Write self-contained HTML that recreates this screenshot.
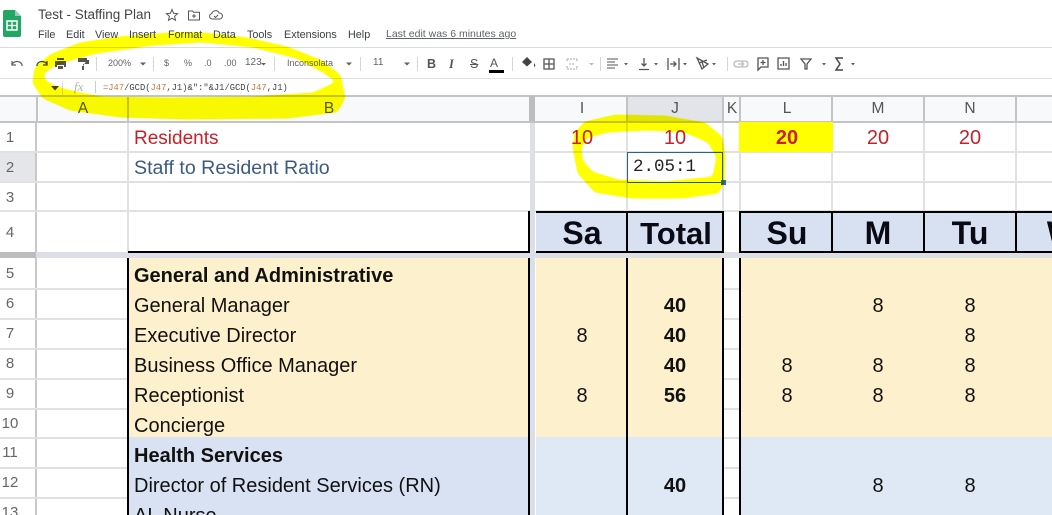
<!DOCTYPE html>
<html><head><meta charset="utf-8"><style>
html,body{margin:0;padding:0;width:1052px;height:515px;overflow:hidden;background:#fff}
body{position:relative;font-family:"Liberation Sans",sans-serif;color:#000}
div{position:absolute}
.t{white-space:nowrap;line-height:1}
.m{top:30px;font-size:10.8px;color:#3c4043}
.tb{top:59px;font-size:9px;color:#5f6368}
.ch{top:101px;font-size:15.5px;color:#555;width:60px;text-align:center}
.rh{left:0;width:20px;text-align:center;font-size:15px;color:#666}
.b{left:134px;font-size:20px;color:#111}
.n{font-size:20px;width:60px;text-align:center;color:#111}
.c{font-size:20px;width:60px;text-align:center;color:#c8202a;top:128px}
.h{font-size:32px;font-weight:bold;width:120px;text-align:center;top:217px;color:#0a0a14}
.g{background:#e1e1e1}
.k{background:#000}
</style></head><body>
<!-- title bar -->
<svg style="position:absolute;left:0;top:0" width="30" height="44"><path d="M5 10h10l6 6v19a2 2 0 0 1-2 2H5a2 2 0 0 1-2-2V12a2 2 0 0 1 2-2z" fill="#23a566"/><path d="M15 10l6 6h-6z" fill="#8ed1b1"/><path d="M7 21h10v9H7z" fill="none" stroke="#fff" stroke-width="1.500"/><path d="M7 25.500h10M12 21v9" stroke="#fff" stroke-width="1.300"/></svg>
<div class="t" style="left:38px;top:8px;font-size:13.500px;color:#444">Test - Staffing Plan</div>
<svg style="position:absolute;left:164px;top:7px" width="64" height="16" fill="none" stroke="#555" stroke-width="1"><path d="M8 2.500l1.600 3.800 4 .3-3 2.700.9 4L8 11.200l-3.500 2.100.9-4-3-2.700 4-.3z"/><path d="M24.500 4h4l1 1.200h6V13h-11z"/><path d="M30 7v4M28 9h4"/><path d="M48 12a2.700 2.700 0 0 1-.3-5.300 4 4 0 0 1 7.500-.7 3 3 0 0 1 .5 6z"/><path d="M50 9l1.500 1.500 2.500-2.500"/></svg>
<div class="t m" style="left:38px">File</div><div class="t m" style="left:66px">Edit</div><div class="t m" style="left:95px">View</div><div class="t m" style="left:129px">Insert</div><div class="t m" style="left:168px">Format</div><div class="t m" style="left:213px">Data</div><div class="t m" style="left:247px">Tools</div><div class="t m" style="left:284px">Extensions</div><div class="t m" style="left:348px">Help</div>
<div class="t" style="left:386px;top:29px;font-size:10.500px;color:#5f6368;text-decoration:underline">Last edit was 6 minutes ago</div>
<!-- toolbar -->
<div style="left:0;top:47px;width:1052px;height:1px;background:#dadce0"></div>
<div style="left:0;top:78px;width:1052px;height:1px;background:#e0e0e0"></div>
<svg style="position:absolute;left:0;top:48px" width="1052" height="30" fill="none" stroke="#5f6368" stroke-width="1.300">
<path d="M12 17a5 4 0 0 1 10 1M12 13v4h4"/><path d="M47 17a5 4 0 0 0-10 1M47 13v4h-4" stroke="#444"/>
<path d="M55 13h11v6h-2v-2h-7v2h-2z" fill="#555" stroke="none"/><path d="M57 10h7v2h-7zM58 18h5v3h-5z" fill="#555" stroke="none"/>
<path d="M78 10h9v4h-9zM87 12h2v4h-6v2M82 18h2v4h-2z" fill="#555" stroke="none"/>
<path d="M96.500 9v14M153.500 9v14M274.500 9v14M360.500 9v14M417.500 9v14M512.500 9v14M600.500 9v14M727.500 9v14" stroke="#d5d5d5" stroke-width="1"/>
<path d="M140 14.500h6l-3 3zM346 14.500h6l-3 3zM404 14.500h6l-3 3z" fill="#5f6368" stroke="none"/>
<path d="M261 15h5l-2.500 2.500z" fill="#5f6368" stroke="none"/>
<path d="M522 14l5-5 5 5-5 4.500zM534 15l1.500 2.500-1.500 1.500" fill="#444" stroke="none"/>
<path d="M544 11h10v10h-10zM544 16h10M549 11v10" stroke="#555"/>
<path d="M567 11h10M567 21h10M567 11v3M577 11v3M567 18v3M577 18v3M569 16h6" stroke="#bbb" stroke-dasharray="2 1"/>
<path d="M589 15h5l-2.500 2.500z" fill="#bbb" stroke="none"/>
<path d="M607 11h11M607 14h8M607 17h11M607 20h8" stroke="#555" stroke-width="1.100"/>
<path d="M624 15h4l-2 2.500zM654 15h4l-2 2.500zM683 15h4l-2 2.500zM712 15h4l-2 2.500zM822 15h4l-2 2.500zM851 15h4l-2 2.500z" fill="#5f6368" stroke="none"/>
<path d="M639 21.500h10M644 10v8M641.500 15.500l2.500 2.500 2.500-2.500" stroke="#555"/>
<path d="M668 10v12M679 10v12M670 16h6M673.500 13.500l2.500 2.500-2.500 2.500" stroke="#555"/>
<path d="M697 10l11 6-6 5zM699 15l8-3M702 14l2 6" stroke="#555"/>
<path d="M737 13h3a2.500 2.500 0 0 1 0 6h-3a2.500 2.500 0 0 1 0-6zM742 13h3a2.500 2.500 0 0 1 0 6h-3M738 16h6" stroke="#bbb"/>
<path d="M758 10h10v9h-7l-3 3zM763 12v5M760.500 14.500h5" stroke="#555"/>
<path d="M778 10h11v11h-11zM781 18v-2M783.500 18v-5M786 18v-3" stroke="#555"/>
<path d="M801 11h10l-4 5v5h-2v-5z" stroke="#555"/>
<path d="M843 10h-7l4 6-4 6h7" stroke="#444" stroke-width="1.500"/>
</svg>
<div class="t tb" style="left:108px">200%</div>
<div class="t tb" style="left:164px">$</div><div class="t tb" style="left:184px">%</div>
<div class="t tb" style="left:204px">.0</div><div class="t tb" style="left:224px">.00</div>
<div class="t tb" style="left:245px;font-size:10px;top:58px">123</div>
<div class="t tb" style="left:287px">Inconsolata</div><div class="t tb" style="left:373px;font-size:10px;top:58px">11</div>
<div class="t" style="left:427px;top:58px;font-size:12.500px;font-weight:bold;color:#555">B</div>
<div class="t" style="left:449px;top:58px;font-size:12.500px;font-style:italic;color:#555;font-family:'Liberation Serif',serif;font-weight:bold">I</div>
<div class="t" style="left:470px;top:58px;font-size:12.500px;color:#555;text-decoration:line-through">S</div>
<div class="t" style="left:490px;top:57px;font-size:12px;color:#555">A</div>
<div class="k" style="left:489px;top:70px;width:15px;height:3px"></div>
<!-- formula -->
<svg style="position:absolute;left:50px;top:85px" width="14" height="8"><path d="M1 1h8l-4 4.500z" fill="#444"/></svg>
<div style="left:62px;top:81px;width:1px;height:15px;background:#ddd"></div>
<div class="t" style="left:74px;top:80px;font-size:13px;font-style:italic;color:#b5b5b5;font-family:'Liberation Serif',serif">fx</div>
<div style="left:95px;top:81px;width:1px;height:12px;background:#ccc"></div>
<div class="t" style="left:103px;top:84px;font-size:8.800px;font-family:'Liberation Mono',monospace;color:#444"><span style="color:#c8793a">=J47</span>/GCD(<span style="color:#c8793a">J47</span>,J1)&amp;":"&amp;J1/GCD(<span style="color:#c8793a">J47</span>,J1)</div>
<!-- column header -->
<div style="left:0;top:96px;width:1052px;height:25px;background:#f8f9fa"></div>
<div style="left:628px;top:97px;width:94px;height:24px;background:#e2e4e9"></div>
<div style="left:0;top:151px;width:35px;height:30px;background:#e4e6ea"></div>
<div style="left:0;top:95px;width:1052px;height:2px;background:#c4c4c4"></div>
<div style="left:0;top:121px;width:1052px;height:2px;background:#c4c4c4"></div>
<div style="left:36px;top:96px;width:2px;height:25px;background:#c4c4c4"></div>
<div style="left:127px;top:96px;width:2px;height:25px;background:#c4c4c4"></div>
<div style="left:626px;top:96px;width:2px;height:25px;background:#c4c4c4"></div>
<div style="left:722px;top:96px;width:2px;height:25px;background:#c4c4c4"></div>
<div style="left:739px;top:96px;width:2px;height:25px;background:#c4c4c4"></div>
<div style="left:831px;top:96px;width:2px;height:25px;background:#c4c4c4"></div>
<div style="left:923px;top:96px;width:2px;height:25px;background:#c4c4c4"></div>
<div style="left:1015px;top:96px;width:2px;height:25px;background:#c4c4c4"></div>
<div class="t ch" style="left:53px">A</div><div class="t ch" style="left:299px">B</div><div class="t ch" style="left:552px">I</div><div class="t ch" style="left:645px">J</div><div class="t ch" style="left:702px">K</div><div class="t ch" style="left:757px">L</div><div class="t ch" style="left:848px">M</div><div class="t ch" style="left:940px">N</div>
<!-- row header -->
<div style="left:0;top:123px;width:35px;height:392px;background:#f8f9fa;z-index:-1"></div>
<div style="left:35px;top:123px;width:2px;height:392px;background:#c8c8c8"></div>
<!-- gridlines -->
<div class="g" style="left:0;top:151px;width:1052px;height:2px"></div>
<div class="g" style="left:0;top:181px;width:1052px;height:2px"></div>
<div class="g" style="left:0;top:210px;width:1052px;height:2px"></div>
<div class="g" style="left:0;top:288px;width:128px;height:2px"></div>
<div class="g" style="left:0;top:318px;width:128px;height:2px"></div>
<div class="g" style="left:0;top:348px;width:128px;height:2px"></div>
<div class="g" style="left:0;top:378px;width:128px;height:2px"></div>
<div class="g" style="left:0;top:408px;width:128px;height:2px"></div>
<div class="g" style="left:0;top:437px;width:128px;height:2px"></div>
<div class="g" style="left:0;top:467px;width:128px;height:2px"></div>
<div class="g" style="left:0;top:497px;width:128px;height:2px"></div>
<div class="g" style="left:722px;top:288px;width:18px;height:2px"></div>
<div class="g" style="left:722px;top:318px;width:18px;height:2px"></div>
<div class="g" style="left:722px;top:348px;width:18px;height:2px"></div>
<div class="g" style="left:722px;top:378px;width:18px;height:2px"></div>
<div class="g" style="left:722px;top:408px;width:18px;height:2px"></div>
<div class="g" style="left:722px;top:437px;width:18px;height:2px"></div>
<div class="g" style="left:722px;top:467px;width:18px;height:2px"></div>
<div class="g" style="left:722px;top:497px;width:18px;height:2px"></div>
<div class="g" style="left:127px;top:123px;width:2px;height:392px"></div>
<div class="g" style="left:626px;top:123px;width:2px;height:88px"></div>
<div class="g" style="left:722px;top:123px;width:2px;height:88px"></div>
<div class="g" style="left:831px;top:123px;width:2px;height:88px"></div>
<div class="g" style="left:923px;top:123px;width:2px;height:88px"></div>
<div class="g" style="left:1015px;top:123px;width:2px;height:88px"></div>
<div class="g" style="left:739px;top:123px;width:2px;height:88px"></div>
<!-- fills -->
<div style="left:128px;top:258px;width:401px;height:179px;background:#fdf0cd"></div>
<div style="left:128px;top:437px;width:401px;height:78px;background:#d9e2f3"></div>
<div style="left:536px;top:258px;width:187px;height:179px;background:#fdf0cd"></div>
<div style="left:740px;top:258px;width:312px;height:179px;background:#fdf0cd"></div>
<div style="left:536px;top:437px;width:187px;height:78px;background:#dfe9f5"></div>
<div style="left:740px;top:437px;width:312px;height:78px;background:#dfe9f5"></div>
<div style="left:536px;top:212px;width:187px;height:40px;background:#d7e1f2"></div>
<div style="left:740px;top:212px;width:312px;height:40px;background:#d7e1f2"></div>
<div style="left:739px;top:122px;width:94px;height:30px;background:#ffff00"></div>
<!-- freeze bars -->
<div style="left:0;top:252px;width:1052px;height:6px;background:#dcdfe6"></div>
<div style="left:0;top:252px;width:36px;height:6px;background:#bdbdbd"></div>
<div style="left:530px;top:123px;width:5px;height:392px;background:#dcdfe6"></div>
<div style="left:529px;top:96px;width:6px;height:25px;background:#bdbdbd"></div>
<!-- black lines -->
<div class="k" style="left:128px;top:251px;width:402px;height:2px"></div>
<div class="k" style="left:536px;top:251px;width:188px;height:2px"></div>
<div class="k" style="left:740px;top:251px;width:312px;height:2px"></div>
<div class="k" style="left:536px;top:211px;width:188px;height:2px"></div>
<div class="k" style="left:740px;top:211px;width:312px;height:2px"></div>
<div class="k" style="left:528px;top:211px;width:2px;height:42px"></div>
<div class="k" style="left:626px;top:211px;width:2px;height:42px"></div>
<div class="k" style="left:722px;top:211px;width:2px;height:42px"></div>
<div class="k" style="left:739px;top:211px;width:2px;height:42px"></div>
<div class="k" style="left:831px;top:211px;width:2px;height:42px"></div>
<div class="k" style="left:923px;top:211px;width:2px;height:42px"></div>
<div class="k" style="left:1015px;top:211px;width:2px;height:42px"></div>
<div class="k" style="left:127px;top:258px;width:2px;height:257px"></div>
<div class="k" style="left:528px;top:258px;width:2px;height:257px"></div>
<div class="k" style="left:626px;top:258px;width:2px;height:257px"></div>
<div class="k" style="left:722px;top:258px;width:2px;height:257px"></div>
<div class="k" style="left:739px;top:258px;width:2px;height:257px"></div>
<!-- row numbers -->
<div class="t rh" style="top:130px">1</div><div class="t rh" style="top:160px">2</div><div class="t rh" style="top:190px">3</div><div class="t rh" style="top:225px">4</div><div class="t rh" style="top:266px">5</div><div class="t rh" style="top:296px">6</div><div class="t rh" style="top:326px">7</div><div class="t rh" style="top:356px">8</div><div class="t rh" style="top:386px">9</div><div class="t rh" style="top:416px">10</div><div class="t rh" style="top:445px">11</div><div class="t rh" style="top:475px">12</div><div class="t rh" style="top:505px">13</div>
<!-- B text -->
<div class="t b" style="top:129px;color:#c8202a;font-size:19px">Residents</div>
<div class="t b" style="top:159px;color:#3d5a85;font-size:19.600px">Staff to Resident Ratio</div>
<div class="t b" style="top:266px;font-weight:bold">General and Administrative</div>
<div class="t b" style="top:296px">General Manager</div>
<div class="t b" style="top:326px">Executive Director</div>
<div class="t b" style="top:356px">Business Office Manager</div>
<div class="t b" style="top:386px">Receptionist</div>
<div class="t b" style="top:416px">Concierge</div>
<div class="t b" style="top:446px;font-weight:bold">Health Services</div>
<div class="t b" style="top:476px">Director of Resident Services (RN)</div>
<div class="t b" style="top:506px">AL Nurse</div>
<!-- top numbers -->
<div class="t c" style="left:552px">10</div><div class="t c" style="left:645px">10</div><div class="t c" style="left:757px;font-weight:bold">20</div><div class="t c" style="left:848px">20</div><div class="t c" style="left:940px">20</div>
<div class="t h" style="left:522px">Sa</div><div class="t h" style="left:616px;font-size:31px;top:218px">Total</div><div class="t h" style="left:727px">Su</div><div class="t h" style="left:818px">M</div><div class="t h" style="left:910px">Tu</div><div class="t h" style="left:1002px">W</div>
<!-- data -->
<div class="t n" style="left:645px;top:296px;font-weight:bold">40</div><div class="t n" style="left:848px;top:296px">8</div><div class="t n" style="left:940px;top:296px">8</div>
<div class="t n" style="left:552px;top:326px">8</div><div class="t n" style="left:645px;top:326px;font-weight:bold">40</div><div class="t n" style="left:940px;top:326px">8</div>
<div class="t n" style="left:645px;top:356px;font-weight:bold">40</div><div class="t n" style="left:757px;top:356px">8</div><div class="t n" style="left:848px;top:356px">8</div><div class="t n" style="left:940px;top:356px">8</div>
<div class="t n" style="left:552px;top:386px">8</div><div class="t n" style="left:645px;top:386px;font-weight:bold">56</div><div class="t n" style="left:757px;top:386px">8</div><div class="t n" style="left:848px;top:386px">8</div><div class="t n" style="left:940px;top:386px">8</div>
<div class="t n" style="left:645px;top:476px;font-weight:bold">40</div><div class="t n" style="left:848px;top:476px">8</div><div class="t n" style="left:940px;top:476px">8</div>
<!-- selected cell -->
<div style="left:627px;top:152px;width:94px;height:29px;border:1px solid #2a6099;background:#fff"></div>
<div class="t" style="left:633px;top:159px;font-size:17.500px;font-family:'Liberation Mono',monospace;color:#222">2.05:1</div>
<div style="left:721px;top:180px;width:5px;height:5px;background:#2a6fb8"></div>
<!-- highlighter -->
<svg style="position:absolute;left:0;top:0;mix-blend-mode:multiply;z-index:5" width="1052" height="515">
<defs><filter id="sm" filterUnits="userSpaceOnUse" x="0" y="0" width="1052" height="515" color-interpolation-filters="sRGB"><feGaussianBlur stdDeviation="2"/><feComponentTransfer><feFuncA type="linear" slope="6" intercept="-2.5"/></feComponentTransfer></filter></defs>
<g filter="url(#sm)">
<path fill="#ffff00" stroke="#ffff00" stroke-width="1" stroke-linejoin="round" fill-rule="evenodd" d="M33 83L35 68L50 55L80 43L120 37L170 33L203 33L247 38L287 47L320 60L340 75L345 98L337 112L287 118L187 119L120 117L70 110L43 98ZM42 75L48 83L60 88L80 93L103 97L170 98L253 97L313 93L337 82L323 72L297 58L253 47L203 42L153 45L97 53L70 60L53 66Z"/>
<path fill="#ffff00" stroke="#ffff00" stroke-width="1" stroke-linejoin="round" fill-rule="evenodd" d="M573 147L575 133L585 122L615 115L665 116L705 123L722 137L725 157L724 182L718 193L682 198L632 198L595 192L578 173ZM581 147L582 160L592 172L618 180L665 182L713 177L717 157L708 142L685 132L648 130L608 132L588 137Z"/>
</g>
</svg>
</body></html>
